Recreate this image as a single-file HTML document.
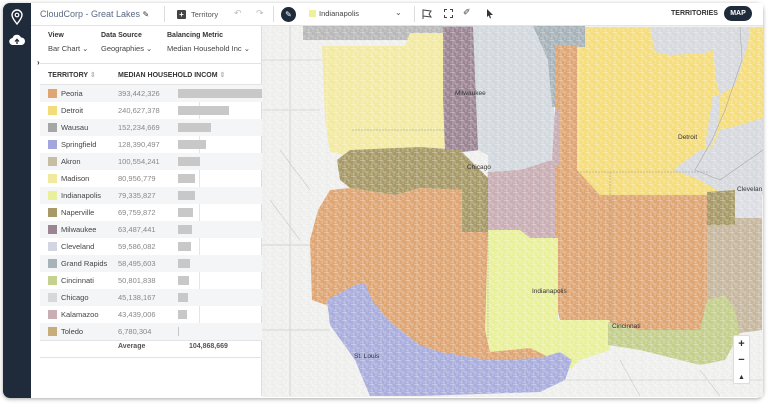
<!DOCTYPE html>
<html><head><style>
*{box-sizing:border-box;margin:0;padding:0}
body{width:768px;height:404px;background:#fff;font-family:"Liberation Sans",sans-serif;position:relative;overflow:hidden;color:#333}
.win{position:absolute;left:3px;top:3px;width:760px;height:395px;border-radius:7px;overflow:hidden;background:#fff;box-shadow:0 1px 4px rgba(0,0,0,.35)}
.side{position:absolute;left:3px;top:3px;width:28px;height:395px;background:#1f2b3b;border-radius:7px 0 0 7px}
.tb{position:absolute;left:31px;top:3px;width:732px;height:23px;background:#fff;border-bottom:1px solid #e3e3e3;font-size:8px;white-space:nowrap}
.abs{position:absolute;white-space:nowrap}
.panel{position:absolute;left:40px;top:26px;width:222px;height:370px;background:#fff;border-right:1px solid #ddd}
.lbl{font-size:7px;font-weight:bold;color:#333}
.val{font-size:7.5px;color:#444}
.row{position:absolute;left:0;width:222px;height:17px;font-size:7.5px}
.row .sw{position:absolute;left:8px;top:4px;width:9px;height:9px}
.row .n{position:absolute;left:21px;top:4px;color:#444}
.row .v{position:absolute;left:78px;top:4px;color:#888}
.row .b{position:absolute;left:138px;top:4px;height:9px;background:#c8c8c8}
.alt{background:#f4f5f7}
.map{position:absolute;left:262px;top:26px;width:501px;height:371px;overflow:hidden;background:#f3f3f2}
.ml{position:absolute;font-size:6.5px;color:#333}
</style></head><body>
<div class="win"></div>
<div class="side">
 <svg class="abs" style="left:7px;top:6px" width="14" height="16" viewBox="0 0 14 16"><path d="M7 15 C3 10 2 8 2 6 A5 5 0 0 1 12 6 C12 8 11 10 7 15Z" fill="none" stroke="#fff" stroke-width="1.4"/><circle cx="7" cy="6" r="1.8" fill="none" stroke="#fff" stroke-width="1.2"/></svg>
 <svg class="abs" style="left:6px;top:31px" width="16" height="12" viewBox="0 0 16 12"><path d="M4 11 A3.5 3.5 0 0 1 3.5 4 A4.5 4.5 0 0 1 12 3.5 A3.5 3.5 0 0 1 12.5 11Z" fill="#fff"/><path d="M8 10V5.5M6 7.5L8 5.3L10 7.5" stroke="#1f2b3b" stroke-width="1.3" fill="none"/></svg>
</div>
<div class="tb">
 <div class="abs" style="left:5px;top:3px;width:118px;height:17px;border-radius:3px;background:#fff;font-size:9px;color:#5a6a80;padding:3px 4px">CloudCorp - Great Lakes <span style="color:#333;font-size:8px">✎</span></div>
 <div class="abs" style="left:133px;top:3px;width:1px;height:16px;background:#ddd"></div>
 <div class="abs" style="left:146px;top:7px;width:9px;height:9px;background:#444;border-radius:1px;color:#fff;font-size:8px;line-height:9px;text-align:center;font-weight:bold">+</div>
 <div class="abs" style="left:160px;top:7px;font-size:7.5px;color:#555">Territory</div>
 <div class="abs" style="left:203px;top:5px;font-size:9px;color:#bbb">↶</div>
 <div class="abs" style="left:225px;top:5px;font-size:9px;color:#bbb">↷</div>
 <div class="abs" style="left:242px;top:3px;width:1px;height:16px;background:#ddd"></div>
 <div class="abs" style="left:250px;top:4px;width:15px;height:15px;border-radius:50%;background:#1f2b3b;color:#fff;font-size:8px;text-align:center;line-height:15px">✎</div>
 <div class="abs" style="left:278px;top:7px;width:7px;height:7px;background:#eef09a"></div>
 <div class="abs" style="left:288px;top:6px;font-size:7.5px;color:#444">Indianapolis</div>
 <div class="abs" style="left:364px;top:5px;font-size:8px;color:#555">⌄</div>
 <div class="abs" style="left:383px;top:3px;width:1px;height:16px;background:#ddd"></div>
 <svg class="abs" style="left:391px;top:6px" width="10" height="10" viewBox="0 0 10 10"><path d="M1 10V1L9 2L7 5L9 8L1 7" fill="none" stroke="#444" stroke-width="1"/></svg>
 <div class="abs" style="left:413px;top:6px;width:9px;height:9px;border:1.2px dashed #444"></div>
 <div class="abs" style="left:432px;top:4px;font-size:9px;color:#444">✐</div>
 <svg class="abs" style="left:455px;top:5px" width="8" height="11" viewBox="0 0 8 11"><path d="M1 1L7 7H4L5 10L4 10.5L2.8 7.5L1 9Z" fill="#333"/></svg>
 <div class="abs" style="left:640px;top:7px;font-size:7px;font-weight:bold;color:#333">TERRITORIES</div>
 <div class="abs" style="left:693px;top:3px;width:28px;height:15px;border-radius:8px;background:#1f2b3b;color:#fff;font-size:7px;font-weight:bold;text-align:center;line-height:15px">MAP</div>
</div>
<div class="map">
<svg width="501" height="371" viewBox="262 26 501 371" style="position:absolute;left:0;top:0">
 <defs>
  <pattern id="g" width="9" height="8" patternUnits="userSpaceOnUse">
   <path d="M0 0.5H5V4H9M3 0V8M7 4V8M0 6H3" fill="none" stroke="#fff" stroke-width="0.5" opacity="0.55"/>
  </pattern>
  <pattern id="g2" width="9" height="8" patternUnits="userSpaceOnUse">
   <path d="M0 0.5H5V4H9M3 0V8M7 4V8M0 6H3" fill="none" stroke="#d6d6d6" stroke-width="0.5"/>
  </pattern>
 </defs>
 <rect x="262" y="26" width="501" height="371" fill="url(#g2)"/>
 <g stroke="#c9c9c9" stroke-width="0.7" fill="none">
  <path d="M262 60H330M262 110H320M262 245H318M262 330H330M290 26V396M280 150L310 190M560 380H763M620 360L640 396M700 370L720 396M270 200L300 240"/>
 </g>
 <polygon points="303,26 480,26 480,40 303,40" fill="#b9b9b9"/>
 <polygon points="322,46 405,46 410,33 445,33 445,148 405,150 370,152 368,160 330,152 325,120" fill="#f3eaa2"/>
 <polygon points="443,27 480,27 480,150 462,152 445,150 443,100" fill="#9c8593"/>
 <polygon points="577,27 763,27 763,195 577,195" fill="#f5dd7c"/>
 <polygon points="650,27 750,27 748,45 735,85 720,95 716,80 713,50 705,53 670,55 655,52" fill="#d6d9dd"/>
 <polygon points="673,170 700,150 712,148 720,130 740,125 763,118 763,195 720,192 700,180" fill="#d6d9dd"/>
 <polygon points="713,95 720,95 718,130 710,148 705,146" fill="#d6d9dd"/>
 <polygon points="473,26 540,26 548,60 555,120 552,165 520,170 500,172 488,178 488,155 478,150" fill="#d3d8de"/>
 <polygon points="533,26 585,26 585,47 562,47 560,107 552,107 548,60" fill="#a7b3b9"/>
 <polygon points="555,46 577,46 577,200 560,200 555,150" fill="#dfa674"/>
 <polygon points="488,172 520,170 552,160 555,110 560,110 560,240 488,238" fill="#c9aeb3"/>
 <polygon points="337,160 350,150 420,147 460,150 470,160 488,178 488,232 462,232 462,190 420,188 395,195 350,188 340,180" fill="#a79a68"/>
 <polygon points="330,190 350,188 395,195 420,188 462,190 462,232 488,232 488,340 555,340 555,360 488,362 470,357 430,358 400,345 375,320 340,310 312,300 310,240 318,210" fill="#dfa674"/>
 <polygon points="555,165 575,168 600,195 710,195 710,330 640,330 620,325 600,322 560,320 555,300" fill="#dfa674"/>
 <polygon points="707,193 762,190 762,330 740,333 720,320 707,300" fill="#c7b79f"/>
 <polygon points="707,192 735,190 735,225 707,225" fill="#a79a68"/>
 <polygon points="735,190 762,188 762,218 735,218" fill="#dcdde4"/>
 <polygon points="488,230 520,230 530,238 558,238 558,320 610,320 610,350 580,360 570,370 555,360 530,348 490,352 485,330" fill="#e9f09a"/>
 <polygon points="608,322 640,330 700,330 707,300 725,295 735,310 740,333 725,360 700,365 680,360 640,350 608,345" fill="#c4cf8c"/>
 <polygon points="327,300 355,285 365,283 372,300 390,322 420,345 440,352 488,360 540,358 560,352 572,360 565,380 540,392 420,396 370,396 355,360 330,325" fill="#a9aedd"/>
 <rect x="262" y="26" width="501" height="371" fill="url(#g)"/>
 <g stroke="#9a9a9a" stroke-width="0.5" fill="none" stroke-dasharray="2 1">
  <path d="M488 172V340M610 172V322M352 130H445M577 172H710"/>
 </g>
 <path d="M740 27L742 60L725 110L712 140L695 170L720 180L763 150" fill="none" stroke="#aaa" stroke-width="0.6"/>
</svg>
<div class="ml" style="left:193px;top:64px">Milwaukee</div>
<div class="ml" style="left:205px;top:138px">Chicago</div>
<div class="ml" style="left:416px;top:108px">Detroit</div>
<div class="ml" style="left:475px;top:160px">Clevelan</div>
<div class="ml" style="left:270px;top:262px">Indianapolis</div>
<div class="ml" style="left:350px;top:297px">Cincinnati</div>
<div class="ml" style="left:92px;top:327px">St. Louis</div>
<div class="abs" style="left:471px;top:309px;width:17px;height:49px;background:#fff;border:1px solid #ddd;border-radius:2px;font-size:11px;font-weight:bold;text-align:center;line-height:16px;color:#333">+<br>−<br><span style="font-size:7px">▲</span></div>
</div>
<div class="panel">
 <div class="abs lbl" style="left:8px;top:6px">View</div>
 <div class="abs val" style="left:8px;top:18px">Bar Chart ⌄</div>
 <div class="abs lbl" style="left:61px;top:6px">Data Source</div>
 <div class="abs val" style="left:61px;top:18px">Geographies ⌄</div>
 <div class="abs lbl" style="left:127px;top:6px">Balancing Metric</div>
 <div class="abs val" style="left:127px;top:18px">Median Household Inc ⌄</div>
 <div class="abs" style="left:0;top:37px;width:222px;height:1px;background:#e3e3e3"></div>
 <div class="abs" style="left:-3px;top:32px;font-size:8px;font-weight:bold;color:#333">›</div>
 <div class="abs lbl" style="left:8px;top:45px">TERRITORY <span style="color:#bbb">⇕</span></div>
 <div class="abs lbl" style="left:78px;top:45px">MEDIAN HOUSEHOLD INCOM <span style="color:#bbb">⇕</span></div>
 <div class="abs" style="left:0;top:58px;width:222px;height:1px;background:#e3e3e3"></div>
 <div class="abs" style="left:159px;top:59px;width:1px;height:256px;background:#e5e5e5"></div>
 <div class="row alt" style="top:59px"><div class="sw" style="background:#dfa674"></div><div class="n">Peoria</div><div class="v">393,442,326</div><div class="b" style="width:84px"></div></div>
 <div class="row" style="top:76px"><div class="sw" style="background:#f3dc7a"></div><div class="n">Detroit</div><div class="v">240,627,378</div><div class="b" style="width:51px"></div></div>
 <div class="row alt" style="top:93px"><div class="sw" style="background:#a6a6a6"></div><div class="n">Wausau</div><div class="v">152,234,669</div><div class="b" style="width:33px"></div></div>
 <div class="row" style="top:110px"><div class="sw" style="background:#a3a6dc"></div><div class="n">Springfield</div><div class="v">128,390,497</div><div class="b" style="width:28px"></div></div>
 <div class="row alt" style="top:127px"><div class="sw" style="background:#c6bda2"></div><div class="n">Akron</div><div class="v">100,554,241</div><div class="b" style="width:22px"></div></div>
 <div class="row" style="top:144px"><div class="sw" style="background:#f1e9a0"></div><div class="n">Madison</div><div class="v">80,956,779</div><div class="b" style="width:17px"></div></div>
 <div class="row alt" style="top:161px"><div class="sw" style="background:#e9ef9a"></div><div class="n">Indianapolis</div><div class="v">79,335,827</div><div class="b" style="width:17px"></div></div>
 <div class="row" style="top:178px"><div class="sw" style="background:#a79a68"></div><div class="n">Naperville</div><div class="v">69,759,872</div><div class="b" style="width:15px"></div></div>
 <div class="row alt" style="top:195px"><div class="sw" style="background:#9c8593"></div><div class="n">Milwaukee</div><div class="v">63,487,441</div><div class="b" style="width:14px"></div></div>
 <div class="row" style="top:212px"><div class="sw" style="background:#d3d6e0"></div><div class="n">Cleveland</div><div class="v">59,586,082</div><div class="b" style="width:13px"></div></div>
 <div class="row alt" style="top:229px"><div class="sw" style="background:#a7b3b9"></div><div class="n">Grand Rapids</div><div class="v">58,495,603</div><div class="b" style="width:12px"></div></div>
 <div class="row" style="top:246px"><div class="sw" style="background:#c5d18e"></div><div class="n">Cincinnati</div><div class="v">50,801,838</div><div class="b" style="width:11px"></div></div>
 <div class="row alt" style="top:263px"><div class="sw" style="background:#d7d9d9"></div><div class="n">Chicago</div><div class="v">45,138,167</div><div class="b" style="width:10px"></div></div>
 <div class="row" style="top:280px"><div class="sw" style="background:#c9aeb3"></div><div class="n">Kalamazoo</div><div class="v">43,439,006</div><div class="b" style="width:9px"></div></div>
 <div class="row alt" style="top:297px"><div class="sw" style="background:#c7ad7a"></div><div class="n">Toledo</div><div class="v">6,780,304</div><div class="b" style="width:1px"></div></div>
 <div class="abs" style="left:0;top:314px;width:222px;height:1px;background:#e3e3e3"></div>
 <div class="abs" style="left:78px;top:317px;font-size:7px;font-weight:bold;color:#555">Average</div>
 <div class="abs" style="left:149px;top:317px;font-size:7px;font-weight:bold;color:#555">104,868,669</div>
 <div class="abs" style="left:0;top:331px;width:222px;height:1px;background:#e3e3e3"></div>
</div>
</body></html>
